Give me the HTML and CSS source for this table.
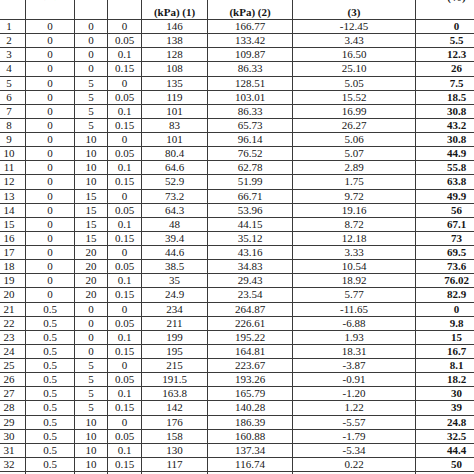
FILE: index.html
```html
<!DOCTYPE html>
<html>
<head>
<meta charset="utf-8">
<link rel="stylesheet" href="styles.css">
</head>
<body>
<table class="data">
<colgroup>
<col class="c1"><col class="c2"><col class="c3"><col class="c4"><col class="c5"><col class="c6"><col class="c7"><col class="c8">
</colgroup>
<thead>
<tr>
<th class="first"><span class="hl">Test</span><span class="hl last">&nbsp;</span></th>
<th><span class="hl">(m)</span><span class="hl last">&nbsp;</span></th>
<th><span class="hl last">&nbsp;</span></th>
<th><span class="hl last">&nbsp;</span></th>
<th><span class="hl">Exp.</span><span class="hl last">(kPa) (1)</span></th>
<th><span class="hl">Num.</span><span class="hl last">(kPa) (2)</span></th>
<th><span class="hl">Difference</span><span class="hl last">(3)</span></th>
<th><span class="hl">BCR</span><span class="hl">(%)</span><span class="hl last-s">&nbsp;</span></th>
</tr>
</thead>
<tbody>
<tr><td class="first">1</td><td>0</td><td>0</td><td>0</td><td>146</td><td>166.77</td><td>-12.45</td><td class="b">0</td></tr>
<tr><td class="first">2</td><td>0</td><td>0</td><td>0.05</td><td>138</td><td>133.42</td><td>3.43</td><td class="b">5.5</td></tr>
<tr><td class="first">3</td><td>0</td><td>0</td><td>0.1</td><td>128</td><td>109.87</td><td>16.50</td><td class="b">12.3</td></tr>
<tr><td class="first">4</td><td>0</td><td>0</td><td>0.15</td><td>108</td><td>86.33</td><td>25.10</td><td class="b">26</td></tr>
<tr><td class="first">5</td><td>0</td><td>5</td><td>0</td><td>135</td><td>128.51</td><td>5.05</td><td class="b">7.5</td></tr>
<tr><td class="first">6</td><td>0</td><td>5</td><td>0.05</td><td>119</td><td>103.01</td><td>15.52</td><td class="b">18.5</td></tr>
<tr><td class="first">7</td><td>0</td><td>5</td><td>0.1</td><td>101</td><td>86.33</td><td>16.99</td><td class="b">30.8</td></tr>
<tr><td class="first">8</td><td>0</td><td>5</td><td>0.15</td><td>83</td><td>65.73</td><td>26.27</td><td class="b">43.2</td></tr>
<tr><td class="first">9</td><td>0</td><td>10</td><td>0</td><td>101</td><td>96.14</td><td>5.06</td><td class="b">30.8</td></tr>
<tr><td class="first">10</td><td>0</td><td>10</td><td>0.05</td><td>80.4</td><td>76.52</td><td>5.07</td><td class="b">44.9</td></tr>
<tr><td class="first">11</td><td>0</td><td>10</td><td>0.1</td><td>64.6</td><td>62.78</td><td>2.89</td><td class="b">55.8</td></tr>
<tr><td class="first">12</td><td>0</td><td>10</td><td>0.15</td><td>52.9</td><td>51.99</td><td>1.75</td><td class="b">63.8</td></tr>
<tr><td class="first">13</td><td>0</td><td>15</td><td>0</td><td>73.2</td><td>66.71</td><td>9.72</td><td class="b">49.9</td></tr>
<tr><td class="first">14</td><td>0</td><td>15</td><td>0.05</td><td>64.3</td><td>53.96</td><td>19.16</td><td class="b">56</td></tr>
<tr><td class="first">15</td><td>0</td><td>15</td><td>0.1</td><td>48</td><td>44.15</td><td>8.72</td><td class="b">67.1</td></tr>
<tr><td class="first">16</td><td>0</td><td>15</td><td>0.15</td><td>39.4</td><td>35.12</td><td>12.18</td><td class="b">73</td></tr>
<tr><td class="first">17</td><td>0</td><td>20</td><td>0</td><td>44.6</td><td>43.16</td><td>3.33</td><td class="b">69.5</td></tr>
<tr><td class="first">18</td><td>0</td><td>20</td><td>0.05</td><td>38.5</td><td>34.83</td><td>10.54</td><td class="b">73.6</td></tr>
<tr><td class="first">19</td><td>0</td><td>20</td><td>0.1</td><td>35</td><td>29.43</td><td>18.92</td><td class="b">76.02</td></tr>
<tr><td class="first">20</td><td>0</td><td>20</td><td>0.15</td><td>24.9</td><td>23.54</td><td>5.77</td><td class="b">82.9</td></tr>
<tr><td class="first">21</td><td>0.5</td><td>0</td><td>0</td><td>234</td><td>264.87</td><td>-11.65</td><td class="b">0</td></tr>
<tr><td class="first">22</td><td>0.5</td><td>0</td><td>0.05</td><td>211</td><td>226.61</td><td>-6.88</td><td class="b">9.8</td></tr>
<tr><td class="first">23</td><td>0.5</td><td>0</td><td>0.1</td><td>199</td><td>195.22</td><td>1.93</td><td class="b">15</td></tr>
<tr><td class="first">24</td><td>0.5</td><td>0</td><td>0.15</td><td>195</td><td>164.81</td><td>18.31</td><td class="b">16.7</td></tr>
<tr><td class="first">25</td><td>0.5</td><td>5</td><td>0</td><td>215</td><td>223.67</td><td>-3.87</td><td class="b">8.1</td></tr>
<tr><td class="first">26</td><td>0.5</td><td>5</td><td>0.05</td><td>191.5</td><td>193.26</td><td>-0.91</td><td class="b">18.2</td></tr>
<tr><td class="first">27</td><td>0.5</td><td>5</td><td>0.1</td><td>163.8</td><td>165.79</td><td>-1.20</td><td class="b">30</td></tr>
<tr><td class="first">28</td><td>0.5</td><td>5</td><td>0.15</td><td>142</td><td>140.28</td><td>1.22</td><td class="b">39</td></tr>
<tr><td class="first">29</td><td>0.5</td><td>10</td><td>0</td><td>176</td><td>186.39</td><td>-5.57</td><td class="b">24.8</td></tr>
<tr><td class="first">30</td><td>0.5</td><td>10</td><td>0.05</td><td>158</td><td>160.88</td><td>-1.79</td><td class="b">32.5</td></tr>
<tr><td class="first">31</td><td>0.5</td><td>10</td><td>0.1</td><td>130</td><td>137.34</td><td>-5.34</td><td class="b">44.4</td></tr>
<tr><td class="first">32</td><td>0.5</td><td>10</td><td>0.15</td><td>117</td><td>116.74</td><td>0.22</td><td class="b">50</td></tr>
<tr><td class="first">33</td><td>0.5</td><td>15</td><td>0</td><td>143</td><td>151.88</td><td>5.34</td><td class="b">39.8</td></tr>
</tbody>
</table>
</body>
</html>
```

FILE: styles.css
```css
html, body {
  margin: 0;
  padding: 0;
  background: #ffffff;
  overflow: hidden;
  width: 474px;
  height: 474px;
}

.data {
  border-collapse: collapse;
  table-layout: fixed;
  width: 501px;
  margin-left: -4px;
  margin-top: -25px;
  font-family: "Liberation Serif", "Times New Roman", serif;
  font-size: 11px;
  color: #161616;
}

.c1 { width: 29px; }
.c2 { width: 49px; }
.c3 { width: 33px; }
.c4 { width: 34px; }
.c5 { width: 66px; }
.c6 { width: 85px; }
.c7 { width: 123px; }
.c8 { width: 82px; }

.data th,
.data td {
  border: 1px solid #3a3a3a;
  padding: 0;
  text-align: center;
  white-space: nowrap;
  overflow: hidden;
}

.data th {
  height: 40px;
  font-weight: bold;
  line-height: 14px;
  vertical-align: bottom;
  padding-bottom: 0;
}

.hl {
  display: block;
}

.hl.last {
  margin-top: 4px;
}

.hl.last-s {
  margin-top: 1px;
}

.data td {
  height: 13.14px;
  line-height: 13px;
  vertical-align: middle;
}

.data .first {
  padding-right: 4px;
}

.data td.b {
  font-weight: bold;
}
```
